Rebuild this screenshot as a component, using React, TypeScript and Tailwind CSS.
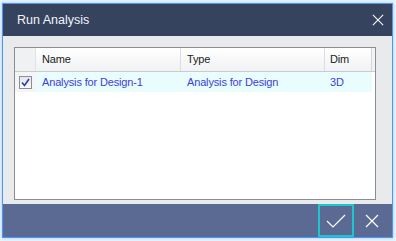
import React from 'react';

const font = { fontFamily: '"Liberation Sans", Arial, sans-serif' };

const CloseIcon = ({ size = 14 }: { size?: number }) => (
  <svg width={size} height={size} viewBox="0 0 14 14" fill="none" stroke="#ffffff" strokeWidth="1.2">
    <path d="M1 1 L13 13 M13 1 L1 13" />
  </svg>
);

const CheckIcon = () => (
  <svg width="20" height="14" viewBox="0 0 20 14" fill="none" stroke="#ffffff" strokeWidth="1.2">
    <path d="M1 7 L7 13 L19 1" />
  </svg>
);

export default function App() {
  return (
    <div className="w-[396px] h-[241px] bg-[#eaf3fd] p-[2px] pt-[3px]" style={font}>
      <div className="w-[391px] h-[235px] border border-[#4d98f0] flex flex-col shadow-[0_0_3px_#9cc8f8]">
        {/* Title bar */}
        <div className="h-[32px] bg-[#36435f] flex items-center justify-between pl-[14px] pr-[8px]">
          <span className="text-[12.5px] text-[#f2f4f8]">Run Analysis</span>
          <CloseIcon size={12} />
        </div>

        {/* Body */}
        <div className="flex-1 bg-[#e9eaec] pt-[11px] pl-[11px] pr-[16px] pb-[4px]">
          <div className="h-full bg-white border border-[#8b8d91] text-[11px] tracking-[-0.15px]">
            <div className="flex h-[24px] border-b border-[#c9cbcf] bg-gradient-to-b from-white to-[#f1f2f4] text-[#1a1a1a]">
              <div className="w-[21px] bg-[#f0f1f3] border-r border-[#e1e2e4]" />
              <div className="w-[145px] flex items-center pl-[6px] border-r border-[#dcdde0]">Name</div>
              <div className="w-[144px] flex items-center pl-[6px] border-r border-[#dcdde0]">Type</div>
              <div className="w-[47px] flex items-center pl-[5px] border-r border-[#d4d5d8]">Dim</div>
              <div className="flex-1 bg-[#f3f3f4]" />
            </div>
            <div className="flex h-[20px] text-[#3b3fdc]">
              <div className="w-[21px] bg-[#f4f5f6] flex items-center justify-center">
                <div className="w-[13px] h-[13px] border border-[#8c8e92] bg-gradient-to-b from-[#e4e6ea] to-[#f8f9fa] flex items-center justify-center">
                  <svg width="9" height="9" viewBox="0 0 9 9" fill="none" stroke="#2c3ea8" strokeWidth="1.6">
                    <path d="M1 4.5 L3.5 7.5 L8 1" />
                  </svg>
                </div>
              </div>
              <div className="w-[145px] flex items-center pl-[6px] bg-[#e9fcfe]">Analysis for Design-1</div>
              <div className="w-[144px] flex items-center pl-[6px] bg-[#e9fcfe]">Analysis for Design</div>
              <div className="w-[47px] flex items-center pl-[5px] bg-[#e9fcfe]">3D</div>
            </div>
          </div>
        </div>

        {/* Footer */}
        <div className="h-[33px] bg-[#5a6a93] flex justify-end items-stretch pr-[2px]">
          <div className="w-[36px] border-2 border-[#1cc6cc] flex items-center justify-center">
            <CheckIcon />
          </div>
          <div className="w-[36px] flex items-center justify-center">
            <CloseIcon size={14} />
          </div>
        </div>
      </div>
    </div>
  );
}
